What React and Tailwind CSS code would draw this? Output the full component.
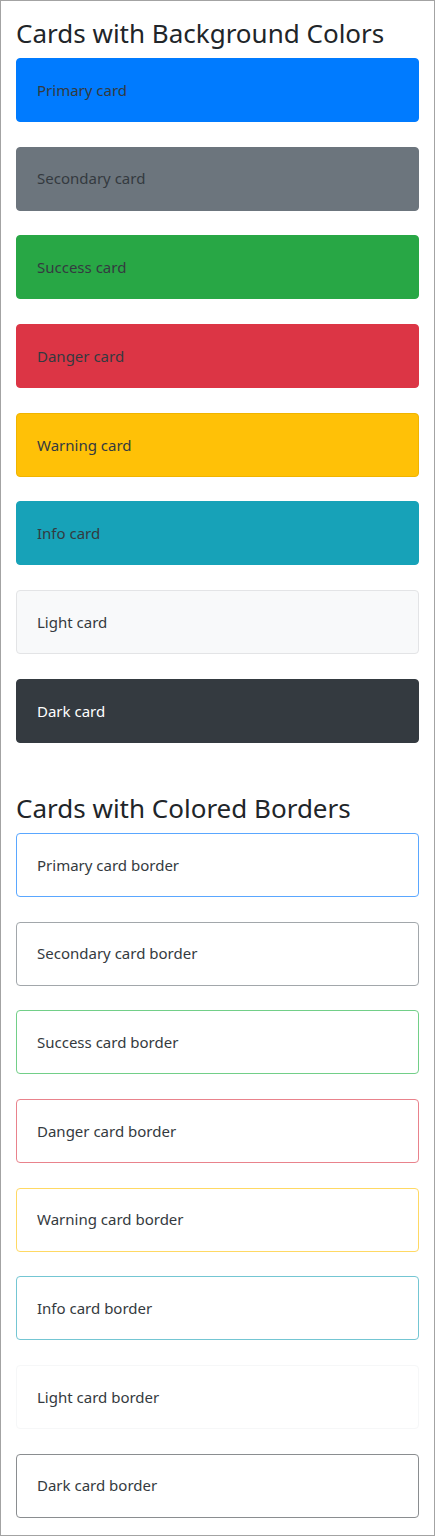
import React from "react";

const bgCards = [
  { label: "Primary card", cls: "bg-[#007bff] border-[#007bff]" },
  { label: "Secondary card", cls: "bg-[#6c757d] border-[#6c757d]" },
  { label: "Success card", cls: "bg-[#28a745] border-[#28a745]" },
  { label: "Danger card", cls: "bg-[#dc3545] border-[#dc3545]" },
  { label: "Warning card", cls: "bg-[#ffc107] border-[#f0b400]" },
  { label: "Info card", cls: "bg-[#17a2b8] border-[#17a2b8]" },
  { label: "Light card", cls: "bg-[#f8f9fa] border-[#e3e4e6]" },
  { label: "Dark card", cls: "bg-[#343a40] border-[#343a40] text-white" },
];

const borderCards = [
  { label: "Primary card border", cls: "border-[#5aa7ff]" },
  { label: "Secondary card border", cls: "border-[#a2a7ab]" },
  { label: "Success card border", cls: "border-[#72cf88]" },
  { label: "Danger card border", cls: "border-[#e9828c]" },
  { label: "Warning card border", cls: "border-[#ffd964]" },
  { label: "Info card border", cls: "border-[#74c6d3]" },
  { label: "Light card border", cls: "border-[#f6f7f8]" },
  { label: "Dark card border", cls: "border-[#8a8d90]" },
];

function Card({ label, cls }) {
  return (
    <div className={"flex h-[64px] items-center rounded-[4px] border px-5 text-[15px] text-[#343a40] " + cls}>
      {label}
    </div>
  );
}

export default function App() {
  return (
    <div className="h-[1536px] w-[435px] border border-[#a3a3a3] bg-white px-[15px] pt-[15px] font-['Noto_Sans',sans-serif]">
      <h2 className="mb-[8px] text-[26px] leading-[34px] text-[#212529]">Cards with Background Colors</h2>
      <div className="flex flex-col gap-[24.7px]">
        {bgCards.map((c) => (
          <Card key={c.label} {...c} />
        ))}
      </div>

      <h2 className="mt-[48px] mb-[8px] text-[26px] leading-[34px] text-[#212529]">Cards with Colored Borders</h2>
      <div className="flex flex-col gap-[24.7px]">
        {borderCards.map((c) => (
          <Card key={c.label} {...c} />
        ))}
      </div>
    </div>
  );
}
